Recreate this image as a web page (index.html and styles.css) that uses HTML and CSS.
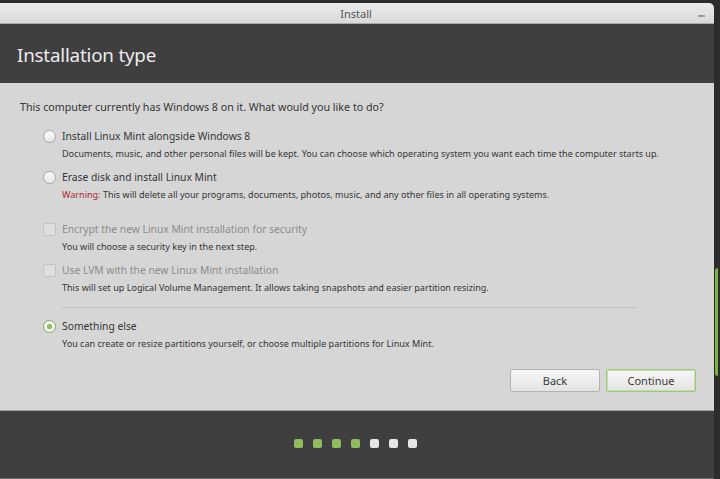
FILE: index.html
```html
<!DOCTYPE html>
<html lang="en">
<head>
    <meta charset="UTF-8">
    <title>Install</title>
    <link rel="stylesheet" href="styles.css">
</head>
<body>
    <div class="desktop">
        <div class="window">
            <div class="titlebar">
                <span class="title">Install</span>
                <span class="minimize"></span>
            </div>

            <header class="page-header">
                <h1>Installation type</h1>
            </header>

            <div class="content">
                <p class="question">This computer currently has Windows 8 on it. What would you like to do?</p>

                <div class="options">
                    <!-- Alongside -->
                    <div class="option">
                        <label class="option-label"><span class="radio"></span>Install Linux Mint alongside Windows 8</label>
                        <p class="desc">Documents, music, and other personal files will be kept. You can choose which operating system you want each time the computer starts up.</p>
                    </div>

                    <!-- Erase -->
                    <div class="option">
                        <label class="option-label"><span class="radio"></span>Erase disk and install Linux Mint</label>
                        <p class="desc"><span class="warning">Warning:</span> This will delete all your programs, documents, photos, music, and any other files in all operating systems.</p>
                    </div>

                    <!-- Disabled extras -->
                    <div class="option option-group">
                        <label class="option-label disabled"><span class="checkbox"></span>Encrypt the new Linux Mint installation for security</label>
                        <p class="desc">You will choose a security key in the next step.</p>
                    </div>

                    <div class="option">
                        <label class="option-label disabled"><span class="checkbox"></span>Use LVM with the new Linux Mint installation</label>
                        <p class="desc">This will set up Logical Volume Management. It allows taking snapshots and easier partition resizing.</p>
                    </div>

                    <hr class="separator">

                    <!-- Manual -->
                    <div class="option">
                        <label class="option-label"><span class="radio checked"></span>Something else</label>
                        <p class="desc">You can create or resize partitions yourself, or choose multiple partitions for Linux Mint.</p>
                    </div>
                </div>

                <div class="buttons">
                    <button class="btn">Back</button>
                    <button class="btn btn-default">Continue</button>
                </div>
            </div>

            <footer class="progress-footer">
                <span class="dot done"></span>
                <span class="dot done"></span>
                <span class="dot done"></span>
                <span class="dot done"></span>
                <span class="dot"></span>
                <span class="dot"></span>
                <span class="dot"></span>
            </footer>
        </div>

        <div class="side">
            <div class="other-window"></div>
        </div>
    </div>
</body>
</html>
```

FILE: styles.css
```css
* {
    margin: 0;
    padding: 0;
    box-sizing: border-box;
}

body {
    font-family: 'Noto Sans', 'DejaVu Sans', sans-serif;
    background-color: #2c2c2c;
    color: #353535;
    width: 720px;
    height: 479px;
    overflow: hidden;
}

.desktop {
    display: flex;
    height: 479px;
}

.window {
    width: 715px;
    margin-top: 3px;
    display: flex;
    flex-direction: column;
    border-right: 1px solid #2a2a2a;
}

/* Title bar */
.titlebar {
    height: 21px;
    background: linear-gradient(#ececec, #d9d9d9);
    border-bottom: 1px solid #a9a9a9;
    border-top-right-radius: 5px;
    display: flex;
    align-items: center;
    justify-content: center;
    position: relative;
}

.title {
    font-size: 11px;
    color: #555;
    margin-left: -2px;
}

.minimize {
    position: absolute;
    right: 9px;
    top: 12px;
    width: 7px;
    height: 2px;
    background-color: #9a9a9a;
}

.page-header {
    height: 59px;
    background-color: #3f3f3f;
    display: flex;
    align-items: center;
    padding-left: 17px;
}

.page-header h1 {
    font-size: 18.8px;
    font-weight: normal;
    color: #ececec;
    margin-top: 2px;
    letter-spacing: -0.2px;
}

/* Main content */
.content {
    height: 328px;
    background-color: #d6d6d6;
    border-bottom: 1px solid #a4a4a4;
    padding: 16px 18px 0 20px;
    display: flex;
    flex-direction: column;
}

.question {
    font-size: 10.7px;
    line-height: 16px;
}

.options {
    margin-top: 12px;
    padding-left: 23px;
}

.option + .option {
    margin-top: 6px;
}

.option.option-group {
    margin-top: 17px;
}

.option-label {
    display: flex;
    align-items: center;
    font-size: 10.3px;
    line-height: 18px;
}

.option-label.disabled {
    color: #8c8c8c;
}

.desc {
    font-size: 9.05px;
    line-height: 17px;
    padding-left: 19px;
}

.warning {
    color: #a8262a;
}

.radio {
    width: 13px;
    height: 13px;
    border-radius: 50%;
    border: 1px solid #a7a7a7;
    background: linear-gradient(#fbfbfb, #e6e6e6);
    margin-right: 6px;
    flex-shrink: 0;
}

.radio.checked {
    border-color: #7fae55;
    background: radial-gradient(circle, #8fbf5f 0, #8fbf5f 2.5px, #f4f4f4 3px);
}

.checkbox {
    width: 13px;
    height: 13px;
    border-radius: 2px;
    border: 1px solid #c3c3c3;
    background-color: #dedede;
    margin-right: 6px;
    flex-shrink: 0;
}

.separator {
    border: none;
    border-top: 1px solid #c3c3c3;
    margin: 11px 0 9px 19px;
    width: 575px;
}

.buttons {
    display: flex;
    justify-content: flex-end;
    gap: 6px;
    margin-top: 17px;
}

.btn {
    width: 90px;
    height: 23px;
    font-family: inherit;
    font-size: 11px;
    color: #3a3a3a;
    background: linear-gradient(#f7f7f7, #e3e3e3);
    border: 1px solid #b3b3b3;
    border-radius: 2px;
}

.btn-default {
    border: 1px solid #9dc77a;
    box-shadow: inset 0 0 0 1px #c4dfae;
}

/* Step dots */
.progress-footer {
    flex: 1;
    background-color: #3f3f3f;
    border-bottom: 1px solid #6a6a6a;
    display: flex;
    justify-content: center;
    align-items: flex-start;
    gap: 10px;
    padding-top: 28px;
    padding-right: 3px;
}

.dot {
    width: 9px;
    height: 9px;
    border-radius: 2px;
    background-color: #e6e6e6;
}

.dot.done {
    background-color: #8fbd5e;
}

.side {
    flex: 1;
    padding-top: 268px;
}

.other-window {
    width: 3px;
    height: 108px;
    background-color: #7cb342;
    border-radius: 3px 0 0 3px;
}
```
